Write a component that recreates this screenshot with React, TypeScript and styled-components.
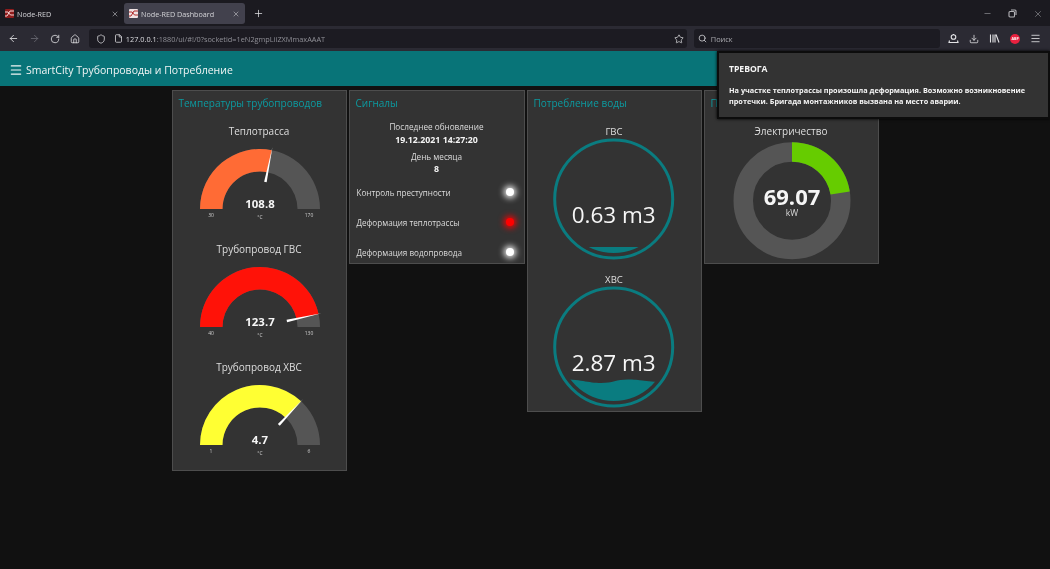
import React from "react";
import styled, { createGlobalStyle } from "styled-components";
import { ArrowLeft, ArrowRight, RotateCw, Home, Shield, File, Star, Search, Download, Menu, Minus, X, Plus } from "lucide-react";

const FONT = `"Open Sans", "Noto Sans", "Liberation Sans", sans-serif`;

const Global = createGlobalStyle`
  html, body { margin: 0; padding: 0; height: 100%; background: #111111; overflow: hidden; }
  #root { height: 100%; }
  * { box-sizing: border-box; }
`;

const Page = styled.div`
  position: relative;
  width: 1050px;
  height: 569px;
  display: flex;
  flex-direction: column;
  font-family: ${FONT};
  background: #111111;
  overflow: hidden;
  filter: blur(0.3px);
`;

const TabBar = styled.div`
  height: 26px;
  flex: none;
  background: #1b1a20;
  display: flex;
  align-items: center;
  padding-top: 1px;
`;
const Tab = styled.div<{ $active?: boolean }>`
  width: ${(p) => (p.$active ? "121px" : "124px")};
  height: 21px;
  display: flex;
  align-items: center;
  padding: 0 5px;
  border-radius: 3px;
  gap: 3px;
  background: ${(p) => (p.$active ? "#42414d" : "transparent")};
  color: #d4d4d8;
  font-size: 7.2px;
`;
const TabLabel = styled.span`
  flex: 1;
  white-space: nowrap;
`;
const NewTab = styled.div`
  width: 26px;
  display: flex;
  justify-content: center;
  color: #e6e6ea;
`;
const Spacer = styled.div`
  flex: 1;
`;
const WinBtn = styled.div`
  width: 25px;
  display: flex;
  justify-content: center;
  color: #b4b4b8;
`;

const ToolBar = styled.div`
  height: 25px;
  flex: none;
  background: #2b2a33;
  display: flex;
  align-items: center;
  padding: 0 4px 0 3px;
`;
const ToolBtn = styled.div<{ $dim?: boolean }>`
  width: 20.7px;
  flex: none;
  display: flex;
  justify-content: center;
  color: ${(p) => (p.$dim ? "#6a6a72" : "#e3e3e6")};
`;
const UrlBar = styled.div`
  width: 598px;
  height: 19px;
  margin-left: 3px;
  flex: none;
  background: #1c1b22;
  border-radius: 3px;
  display: flex;
  align-items: center;
  padding: 0 3px 0 4px;
  color: #e3e3e6;
`;
const UrlIcon = styled.div`
  width: 17px;
  display: flex;
  justify-content: center;
  flex: none;
`;
const UrlText = styled.div`
  margin-left: -1px;
  flex: 1;
  font-size: 7.35px;
  color: #8f8f96;
  white-space: nowrap;
`;
const UrlHost = styled.span`
  color: #dcdce0;
`;
const SearchBar = styled.div`
  width: 246px;
  height: 19px;
  flex: none;
  margin: 0 3px 0 7px;
  background: #1c1b22;
  border-radius: 3px;
  display: flex;
  align-items: center;
  gap: 4px;
  padding-left: 4px;
  color: #a9a9ae;
  font-size: 7.4px;
`;
const SearchIcon = styled.span`
  display: flex;
  color: #dcdce0;
`;
const AbpIcon = styled.div`
  width: 10px;
  height: 10px;
  border-radius: 50%;
  background: #e8213f;
  color: #fff;
  font-size: 3.6px;
  font-weight: 700;
  display: flex;
  align-items: center;
  justify-content: center;
`;

const Header = styled.header`
  height: 35px;
  flex: none;
  background: #087478;
  display: flex;
  align-items: center;
  padding: 2px 0 0 9px;
  gap: 3px;
  color: #f2f5f5;
  font-size: 10.5px;
`;

const Main = styled.main`
  flex: 1;
  display: flex;
  justify-content: center;
  align-items: flex-start;
  gap: 2px;
  padding-top: 4px;
`;
const Panel = styled.section<{ $w: number; $h: number }>`
  width: ${(p) => p.$w}px;
  height: ${(p) => p.$h}px;
  background: #333333;
  border: 1px solid #4d4d4d;
  color: #dcdcdc;
  display: flex;
  flex-direction: column;
  overflow: hidden;
`;
const PanelTitle = styled.h2`
  margin: 0;
  height: 31px;
  flex: none;
  padding: 5px 0 0 6px;
  font-size: 10px;
  line-height: 14px;
  font-weight: 400;
  color: #0c9ba1;
  white-space: nowrap;
`;
const WidgetTitle = styled.div`
  height: 18px;
  flex: none;
  text-align: center;
  font-size: 10px;
  line-height: 18px;
  color: #dedede;
`;
const GaugeBlock = styled.div`
  height: 118px;
  flex: none;
  display: flex;
  flex-direction: column;
  & svg { display: block; flex: none; }
`;

const InfoBlock = styled.div`
  display: flex;
  flex-direction: column;
  align-items: center;
  margin: -2px 0 -2px;
  font-size: 8.2px;
  line-height: 13.5px;
  color: #dcdcdc;
`;
const InfoValue = styled.div`
  font-weight: 700;
  color: #f4f4f4;
  margin-bottom: 2.5px;
  font-size: 8.8px;
`;
const LedRow = styled.div`
  height: 30px;
  flex: none;
  display: flex;
  align-items: center;
  justify-content: space-between;
  padding: 0 10px 0 7px;
  font-size: 8.1px;
`;
const Led = styled.span<{ $c: string }>`
  width: 8px;
  height: 8px;
  border-radius: 50%;
  background: ${(p) => p.$c};
  box-shadow: 0 0 6px 2px ${(p) => p.$c};
  margin-top: -1px;
`;
const LiquidBlock = styled.div`
  flex: none;
  margin-top: 2px;
  margin-bottom: 8px;
  & svg { display: block; }
`;
const LiquidTitle = styled.div`
  height: 16px;
  margin-bottom: -3px;
  text-align: center;
  font-size: 9.6px;
  line-height: 16px;
  color: #dedede;
`;

const Alarm = styled.aside`
  position: absolute;
  left: 717px;
  top: 51px;
  width: 333px;
  height: 68px;
  background: #333333;
  border: 2px solid #0c0c0c;
  padding: 10px 0 0 10px;
  color: #f5f5f5;
  font-weight: 700;
  box-shadow: 0 0 3px #000;
`;
const AlarmTitle = styled.div`
  font-size: 8.6px;
  line-height: 12px;
  margin-bottom: 10px;
`;
const AlarmText = styled.div`
  font-size: 7.3px;
  line-height: 10.5px;
  width: 305px;
`;

function arc(cx: number, cy: number, R: number, r: number, f0: number, f1: number) {
  const pt = (rad: number, f: number) => {
    const t = Math.PI * (1 - f);
    return `${(cx + rad * Math.cos(t)).toFixed(2)} ${(cy - rad * Math.sin(t)).toFixed(2)}`;
  };
  return `M${pt(R, f0)} A${R} ${R} 0 0 1 ${pt(R, f1)} L${pt(r, f1)} A${r} ${r} 0 0 0 ${pt(r, f0)} Z`;
}

function Gauge(props: { title: string; value: string; min: string; max: string; f: number; color: string }) {
  const { title, value, min, max, f, color } = props;
  const cx = 87;
  const cy = 69;
  const t = Math.PI * (1 - f);
  const ux = Math.cos(t);
  const uy = -Math.sin(t);
  const nx = -uy;
  const ny = ux;
  const a = [cx + ux * 27.5, cy + uy * 27.5];
  const tip = [cx + ux * 63, cy + uy * 63];
  const needle = `${a[0] + nx * 1.3},${a[1] + ny * 1.3} ${a[0] - nx * 1.3},${a[1] - ny * 1.3} ${tip[0]},${tip[1]}`;
  return (
    <GaugeBlock>
      <WidgetTitle>{title}</WidgetTitle>
      <svg width="173" height="100" viewBox="0 0 173 100">
        <path d={arc(cx, cy, 60, 37.5, 0, 1)} fill="#555555" />
        <path d={arc(cx, cy, 60, 37.5, 0, f)} fill={color} />
        <polygon points={needle} fill="#ffffff" />
        <text x={cx} y={cy - 1} textAnchor="middle" fontSize="11.4" fontWeight="700" fill="#f6f6f6" fontFamily={FONT}>{value}</text>
        <text x={cx} y={cy + 9.5} textAnchor="middle" fontSize="5" fill="#cfcfcf" fontFamily={FONT}>°C</text>
        <text x={cx - 49} y={cy + 8} textAnchor="middle" fontSize="5" fill="#cfcfcf" fontFamily={FONT}>{min}</text>
        <text x={cx + 49} y={cy + 8} textAnchor="middle" fontSize="5" fill="#cfcfcf" fontFamily={FONT}>{max}</text>
      </svg>
    </GaugeBlock>
  );
}

function Liquid(props: { id: string; title: string; value: string; wave: string }) {
  const cx = 85.7;
  const cy = 62;
  return (
    <LiquidBlock>
      <LiquidTitle>{props.title}</LiquidTitle>
      <svg width="173" height="125" viewBox="0 0 173 125">
        <defs>
          <clipPath id={props.id}>
            <circle cx={cx} cy={cy} r={54} />
          </clipPath>
        </defs>
        <circle cx={cx} cy={cy} r={59} fill="none" stroke="#0a7c80" strokeWidth="3" />
        <path d={props.wave} fill="#0a7c80" clipPath={`url(#${props.id})`} />
        <text x={cx} y={cy + 24.4} textAnchor="middle" fontSize="22.5" fill="#f6f6f6" fontFamily={FONT}>{props.value}</text>
      </svg>
    </LiquidBlock>
  );
}

function Donut() {
  const cx = 87;
  const cy = 60.7;
  const R = 58.5;
  const r = 39;
  const ang = (81 * Math.PI) / 180;
  const p = (rad: number) => `${(cx + rad * Math.sin(ang)).toFixed(2)} ${(cy - rad * Math.cos(ang)).toFixed(2)}`;
  return (
    <GaugeBlock>
      <WidgetTitle>Электричество</WidgetTitle>
      <svg width="173" height="125" viewBox="0 0 173 125">
        <circle cx={cx} cy={cy} r={(R + r) / 2} fill="none" stroke="#555555" strokeWidth={R - r} />
        <path d={`M${cx} ${cy - R} A${R} ${R} 0 0 1 ${p(R)} L${p(r)} A${r} ${r} 0 0 0 ${cx} ${cy - r} Z`} fill="#66cc00" />
        <text x={cx} y={cy + 4.6} textAnchor="middle" fontSize="22" fontWeight="700" fill="#f6f6f6" fontFamily={FONT}>69.07</text>
        <text x={cx} y={cy + 15.5} textAnchor="middle" fontSize="8.6" fill="#d8d8d8" fontFamily={FONT}>kW</text>
      </svg>
    </GaugeBlock>
  );
}

function Favicon(props: { light?: boolean }) {
  return (
    <svg width="9" height="9" viewBox="0 0 9 9" style={{ flex: "none" }}>
      <rect width="9" height="9" rx="1" fill={props.light ? "#efe3e3" : "#8f1c1c"} />
      <path d="M0 3h3l2.5 3H9M0 7h2l3-5h4" stroke={props.light ? "#b02a2a" : "#f4d5d5"} strokeWidth="1" fill="none" />
    </svg>
  );
}

export default function App() {
  const s = 1.6;
  return (
    <Page>
      <Global />
      <TabBar>
        <Tab>
          <Favicon />
          <TabLabel>Node-RED</TabLabel>
          <X size={8} strokeWidth={s} />
        </Tab>
        <Tab $active>
          <Favicon light />
          <TabLabel>Node-RED Dashboard</TabLabel>
          <X size={8} strokeWidth={s} />
        </Tab>
        <NewTab><Plus size={11} strokeWidth={s} /></NewTab>
        <Spacer />
        <WinBtn><Minus size={9} strokeWidth={1.4} /></WinBtn>
        <WinBtn>
          <svg width="9" height="9" viewBox="0 0 9 9" fill="none" stroke="currentColor" strokeWidth="1.1">
            <rect x="1" y="2.5" width="5.5" height="5.5" rx="1" />
            <path d="M3 1h4a1 1 0 0 1 1 1v4" />
          </svg>
        </WinBtn>
        <WinBtn><X size={10} strokeWidth={1.2} /></WinBtn>
      </TabBar>
      <ToolBar>
        <ToolBtn><ArrowLeft size={11} strokeWidth={1.8} /></ToolBtn>
        <ToolBtn $dim><ArrowRight size={11} strokeWidth={1.8} /></ToolBtn>
        <ToolBtn><RotateCw size={10} strokeWidth={1.9} /></ToolBtn>
        <ToolBtn><Home size={10} strokeWidth={1.9} /></ToolBtn>
        <UrlBar>
          <UrlIcon><Shield size={10} strokeWidth={1.8} /></UrlIcon>
          <UrlIcon><File size={9} strokeWidth={2} /></UrlIcon>
          <UrlText><UrlHost>127.0.0.1</UrlHost>:1880/ui/#!/0?socketid=1eN2gmpLiiZXMmaxAAAT</UrlText>
          <Star size={10} strokeWidth={1.7} />
        </UrlBar>
        <SearchBar>
          <SearchIcon><Search size={9} strokeWidth={2} /></SearchIcon>
          Поиск
        </SearchBar>
        <ToolBtn>
          <svg width="11" height="11" viewBox="0 0 11 11" fill="none" stroke="currentColor" strokeWidth="1.1">
            <circle cx="5.5" cy="4" r="2.3" />
            <path d="M1.5 7.5l-.5 2h9l-.5-2M5.5 1v1" />
          </svg>
        </ToolBtn>
        <ToolBtn><Download size={10} strokeWidth={1.9} /></ToolBtn>
        <ToolBtn>
          <svg width="11" height="11" viewBox="0 0 11 11" fill="none" stroke="currentColor" strokeWidth="1.1">
            <path d="M1.5 1.5v8M4 1.5v8M6 1.5v8M7 1.5l3 8" />
          </svg>
        </ToolBtn>
        <ToolBtn><AbpIcon>ABP</AbpIcon></ToolBtn>
        <ToolBtn><Menu size={11} strokeWidth={1.8} /></ToolBtn>
      </ToolBar>
      <Header>
        <Menu size={14} strokeWidth={2} />
        SmartCity Трубопроводы и Потребление
      </Header>
      <Main>
        <Panel $w={175} $h={381}>
          <PanelTitle>Температуры трубопроводов</PanelTitle>
          <Gauge title="Теплотрасса" value="108.8" min="30" max="170" f={0.563} color="#ff6b35" />
          <Gauge title="Трубопровод ГВС" value="123.7" min="40" max="130" f={0.93} color="#ff1208" />
          <Gauge title="Трубопровод ХВС" value="4.7" min="1" max="6" f={0.74} color="#ffff33" />
        </Panel>
        <Panel $w={176} $h={174}>
          <PanelTitle>Сигналы</PanelTitle>
          <InfoBlock>
            Последнее обновление
            <InfoValue>19.12.2021 14:27:20</InfoValue>
            День месяца
            <InfoValue>8</InfoValue>
          </InfoBlock>
          <LedRow>Контроль преступности<Led $c="#ffffff" /></LedRow>
          <LedRow>Деформация теплотрассы<Led $c="#ff0000" /></LedRow>
          <LedRow>Деформация водопровода<Led $c="#ffffff" /></LedRow>
        </Panel>
        <Panel $w={175} $h={322}>
          <PanelTitle>Потребление воды</PanelTitle>
          <Liquid id="l1" title="ГВС" value="0.63 m3" wave="M20 110 H150 V125 H20 Z" />
          <Liquid id="l2" title="ХВС" value="2.87 m3" wave="M30 94 C52 94 60 98 73 98 C85 98 88 94.5 100 94.5 C112 94.5 120 97 145 98 V125 H30 Z" />
        </Panel>
        <Panel $w={175} $h={174}>
          <PanelTitle>Потребление</PanelTitle>
          <Donut />
        </Panel>
      </Main>
      <Alarm>
        <AlarmTitle>ТРЕВОГА</AlarmTitle>
        <AlarmText>На участке теплотрассы произошла деформация. Возможно возникновение протечки. Бригада монтажников вызвана на место аварии.</AlarmText>
      </Alarm>
    </Page>
  );
}
